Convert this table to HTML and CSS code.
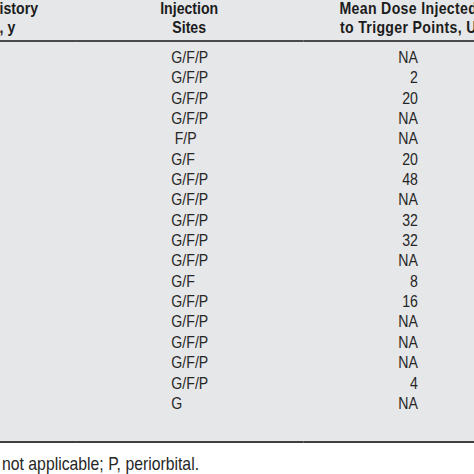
FILE: index.html
```html
<!DOCTYPE html>
<html>
<head>
	<meta charset="utf-8">
	<title>Injection sites and doses</title>
	<link rel="stylesheet" href="styles.css">
</head>
<body>
<div class="sheet">
	<table class="doses">
		<colgroup>
			<col class="col-history">
			<col class="col-sites">
			<col class="col-dose">
		</colgroup>
		<thead>
			<tr>
				<th class="h-history">Headache History<br>Duration, y</th>
				<th>Injection<br>Sites</th>
				<th class="h-dose">Mean Dose Injected<br>to Trigger Points, U</th>
			</tr>
		</thead>
		<tbody>
			<tr><td></td><td class="site">G/F/P</td><td class="dose">NA</td></tr>
			<tr><td></td><td class="site">G/F/P</td><td class="dose">2</td></tr>
			<tr><td></td><td class="site">G/F/P</td><td class="dose">20</td></tr>
			<tr><td></td><td class="site">G/F/P</td><td class="dose">NA</td></tr>
			<tr><td></td><td class="site indent">F/P</td><td class="dose">NA</td></tr>
			<tr><td></td><td class="site">G/F</td><td class="dose">20</td></tr>
			<tr><td></td><td class="site">G/F/P</td><td class="dose">48</td></tr>
			<tr><td></td><td class="site">G/F/P</td><td class="dose">NA</td></tr>
			<tr><td></td><td class="site">G/F/P</td><td class="dose">32</td></tr>
			<tr><td></td><td class="site">G/F/P</td><td class="dose">32</td></tr>
			<tr><td></td><td class="site">G/F/P</td><td class="dose">NA</td></tr>
			<tr><td></td><td class="site">G/F</td><td class="dose">8</td></tr>
			<tr><td></td><td class="site">G/F/P</td><td class="dose">16</td></tr>
			<tr><td></td><td class="site">G/F/P</td><td class="dose">NA</td></tr>
			<tr><td></td><td class="site">G/F/P</td><td class="dose">NA</td></tr>
			<tr><td></td><td class="site">G/F/P</td><td class="dose">NA</td></tr>
			<tr><td></td><td class="site">G/F/P</td><td class="dose">4</td></tr>
			<tr><td></td><td class="site">G</td><td class="dose">NA</td></tr>
		</tbody>
	</table>
	<p class="note">not applicable; P, periorbital.</p>
</div>
</body>
</html>
```

FILE: styles.css
```css
html, body{
	margin: 0;
	padding: 0;
	background-color: #fff;
	overflow: hidden;
}
body{
	font-family: "Liberation Sans", Arial, sans-serif;
	color: #262626;
}
/* no narrow face installed: squeeze the whole sheet instead */
.sheet{
	margin-left: -110px;
	width: 744px;
	transform: scaleX(0.83);
	transform-origin: 0 0;
}
.doses{
	width: 744px;
	table-layout: fixed;
	border-collapse: collapse;
	background-color: #e6e7e9;
	margin-top: -1px;
	font-size: 17px;
	border-bottom: 2px solid #3f3f3f;
}
.col-history{ width: 223px; }
.col-sites{ width: 275px; }
.col-dose{ width: 246px; }

.doses th{
	font-weight: bold;
	color: #1c1c1c;
	line-height: 19px;
	padding: 0 0 3px 0;
	text-align: center;
	white-space: nowrap;
	border-bottom: 2px solid #4a4a4a;
}
.doses th.h-history{
	padding-right: 10px;
}
.doses th.h-dose{
	padding-left: 7px;
	letter-spacing: 0.4px;
}
.doses td{
	line-height: 20.35px;
	padding: 0;
	white-space: nowrap;
}
.doses tbody tr:first-child td{
	padding-top: 6px;
}
.doses tbody tr:last-child td{
	padding-bottom: 27px;
}
.site{
	padding-left: 116px !important;
	text-align: left;
}
.site.indent{
	padding-left: 120px !important;
}
.dose{
	text-align: right;
	padding-right: 108px !important;
}
.note{
	margin: 0;
	padding: 10px 0 0 135px;
	font-size: 19px;
	line-height: 22px;
	color: #262626;
}
```
